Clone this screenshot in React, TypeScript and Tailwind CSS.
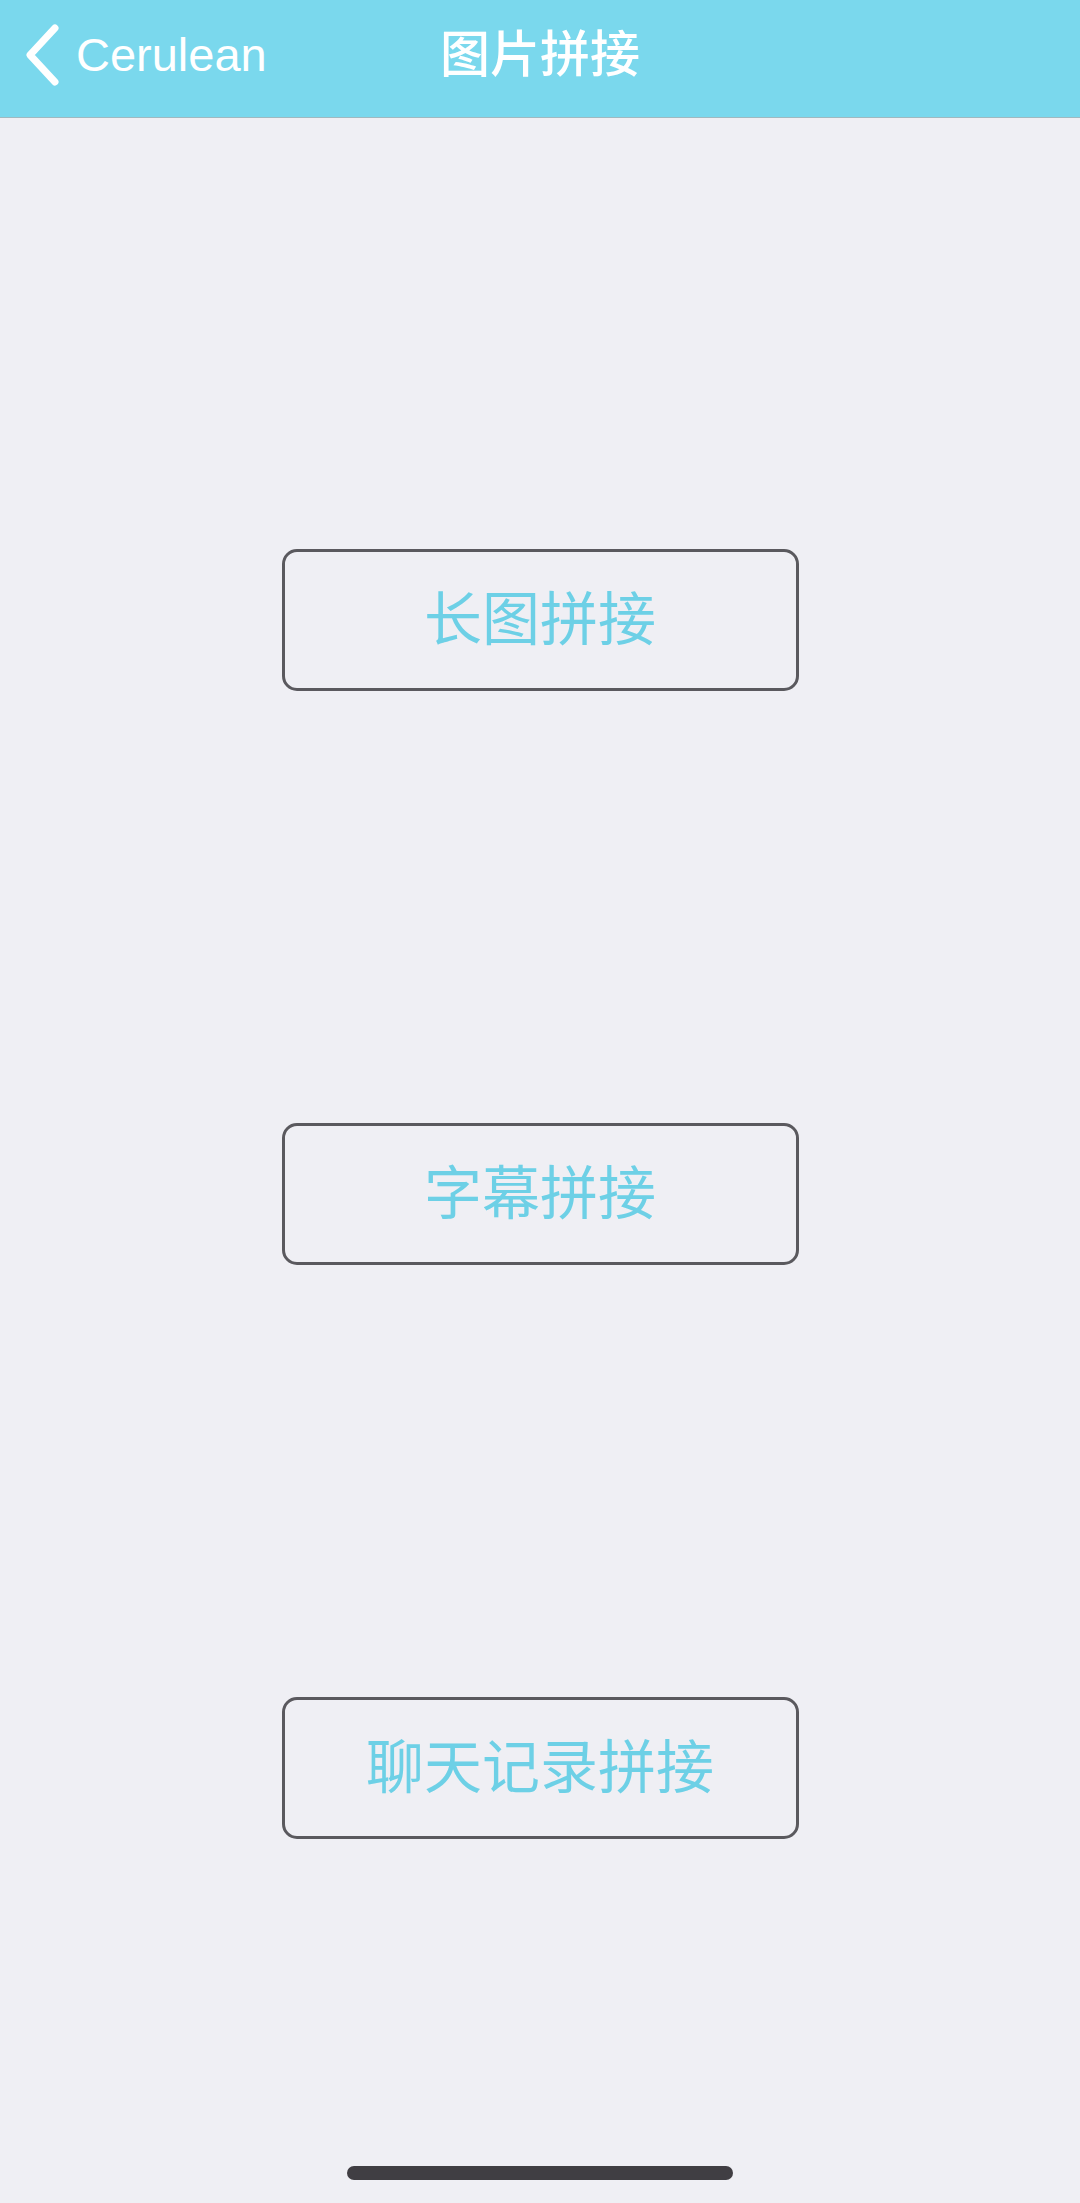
const cjk = "font-['Liberation_Sans','Noto_Sans_CJK_SC',sans-serif]";

function NavBar() {
  return (
    <div className="relative flex h-[118px] items-center justify-center border-b border-[#9fb9c0] bg-[#7ad8ed]">
      <div className="absolute left-[22px] top-0 flex h-full items-center gap-[14px] pb-[8px]">
        <svg width="40" height="64" viewBox="0 0 40 64" fill="none">
          <path
            d="M33 5 L8 32 L33 59"
            stroke="white"
            strokeWidth="7"
            strokeLinecap="round"
            strokeLinejoin="round"
          />
        </svg>
        <span className={`${cjk} text-[47px] leading-none text-white`}>Cerulean</span>
      </div>
      <h1 className={`${cjk} pb-[8px] text-[50px] font-medium leading-none text-white`}>
        图片拼接
      </h1>
    </div>
  );
}

function StitchButton({ label }: { label: string }) {
  return (
    <button
      type="button"
      className={`${cjk} flex h-[142px] w-[517px] items-center justify-center rounded-[15px] border-[3px] border-[#5a595e] text-[58px] leading-none text-[#6dd0e6]`}
    >
      {label}
    </button>
  );
}

export default function App() {
  return (
    <div className="flex h-[2203px] w-[1080px] flex-col bg-[#efeff4]">
      <NavBar />
      <div className="flex flex-1 flex-col items-center gap-[432px] pt-[431px]">
        <StitchButton label="长图拼接" />
        <StitchButton label="字幕拼接" />
        <StitchButton label="聊天记录拼接" />
      </div>
      <div className="flex justify-center pb-[23px]">
        <div className="h-[14px] w-[386px] rounded-full bg-[#403e43]" />
      </div>
    </div>
  );
}
